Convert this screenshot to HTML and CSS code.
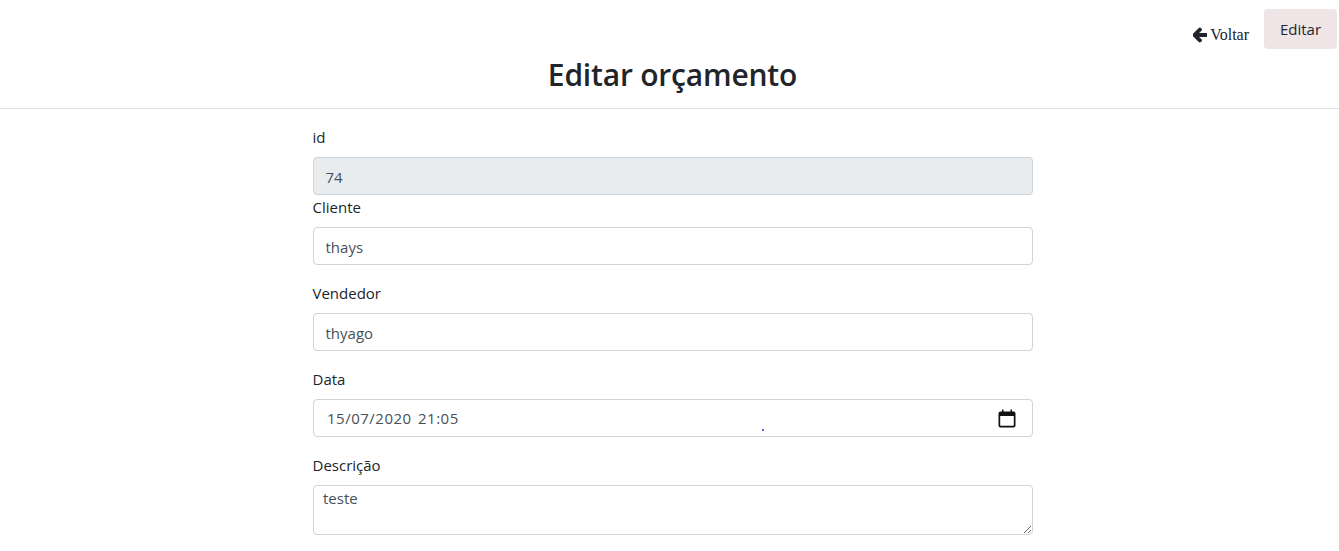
FILE: index.html
```html
<!DOCTYPE html>
<html lang="pt-BR">
<head>
<meta charset="utf-8">
<title>Editar orçamento</title>
<link rel="stylesheet" href="styles.css">
</head>
<body>
<header class="page-header">
  <div class="actions">
    <a class="back" href="#"><svg class="back-icon" viewBox="0 0 448 512" aria-hidden="true"><path d="M257.500 445.100l-22.200 22.200c-9.400 9.400-24.600 9.400-33.900 0L7 273c-9.400-9.400-9.400-24.600 0-33.900L201.400 44.700c9.400-9.400 24.600-9.400 33.900 0l22.200 22.200c9.500 9.500 9.300 25-.4 34.300L136.600 216H424c13.300 0 24 10.700 24 24v32c0 13.300-10.700 24-24 24H136.600l120.500 114.800c9.800 9.300 10 24.800.4 34.300z"/></svg>Voltar</a>
    <button class="edit" type="button">Editar</button>
  </div>
  <h1 class="title">Editar orçamento</h1>
</header>
<main class="form">
  <div class="field field-first">
    <label class="label">id</label>
    <input class="control control-disabled" type="text" value="74" disabled>
  </div>
  <div class="field">
    <label class="label">Cliente</label>
    <input class="control" type="text" value="thays">
  </div>
  <div class="field">
    <label class="label">Vendedor</label>
    <input class="control" type="text" value="thyago">
  </div>
  <div class="field">
    <label class="label">Data</label>
    <div class="date-wrap">
      <input class="control control-date" type="text" value="15/07/2020 21:05">
      <svg class="calendar" viewBox="0 0 18 19" aria-hidden="true"><path d="M4 0.500v2H2.500C1.400 2.500 0.500 3.400 0.500 4.500v12c0 1.100 0.900 2 2 2h13c1.100 0 2-0.900 2-2v-12c0-1.100-0.900-2-2-2H14v-2h-1.500v2h-7v-2H4zM2.200 7h13.600v9.300c0 0.300-0.200 0.500-0.500 0.500H2.700c-0.300 0-0.500-0.200-0.500-0.500V7z"/></svg>
      <span class="dot"></span>
    </div>
  </div>
  <div class="field">
    <label class="label">Descrição</label>
    <textarea class="control control-area">teste</textarea>
  </div>
</main>
</body>
</html>
```
FILE: styles.css
```css
* { box-sizing: border-box; }
html, body { margin: 0; padding: 0; background: #fff; }
body {
  height: 551px;
  overflow: hidden;
  font-family: "Open Sans", "Noto Sans", sans-serif;
  color: #212529;
  font-size: 15px;
}
.page-header {
  height: 109px;
  border-bottom: 1px solid #dee2e6;
  display: flex;
  flex-direction: column;
}
.actions {
  display: flex;
  justify-content: flex-end;
  align-items: flex-start;
  padding: 9px 2px 0 0;
  height: 57px;
}
.back {
  display: flex;
  align-items: center;
  margin: 18px 15px 0 0;
  font-family: "Liberation Serif", serif;
  font-size: 16px;
  line-height: 16px;
  color: #212529;
  text-decoration: none;
}
.back-icon { width: 14px; height: 16px; margin-right: 3px; fill: #212529; stroke: #212529; stroke-width: 45; }
.edit {
  width: 73px;
  height: 40px;
  border: 0;
  border-radius: 4px;
  background: #efe5e7;
  color: #212529;
  font-family: inherit;
  font-size: 15px;
}
.title {
  margin: 0;
  padding-left: 6px;
  text-align: center;
  font-size: 30px;
  font-weight: 600;
  line-height: 36px;
  letter-spacing: -0.2px;
}
.form { width: 720px; margin-left: 313px; padding-top: 16px; }
.field { margin-top: 16px; }
.field-first { margin-top: 0; }
.field:nth-child(2) { margin-top: 0; }
.label {
  display: block;
  height: 32px;
  line-height: 24px;
  font-size: 15px;
  margin-left: -0.5px;
}
.control {
  display: block;
  width: 720px;
  height: 38px;
  padding: 7px 12px 5px 11.500px;
  border: 1px solid #ced4da;
  border-radius: 4px;
  background: #fff;
  color: #495057;
  font-family: inherit;
  font-size: 15px;
  outline: none;
}
.control-disabled { background: #e9ecef; opacity: 1; }
.control-date { padding: 6px 12px 6px 13px; letter-spacing: 0.5px; word-spacing: 2px; }
.date-wrap { position: relative; }
.calendar { position: absolute; left: 685px; top: 10px; width: 18px; height: 19px; fill: #111; }
.dot { position: absolute; left: 449px; top: 30px; width: 2px; height: 2px; border-radius: 50%; background: #3030ff; }
.control-area { height: 50px; padding: 2px 9px 4px; line-height: 20px; resize: vertical; }
```
